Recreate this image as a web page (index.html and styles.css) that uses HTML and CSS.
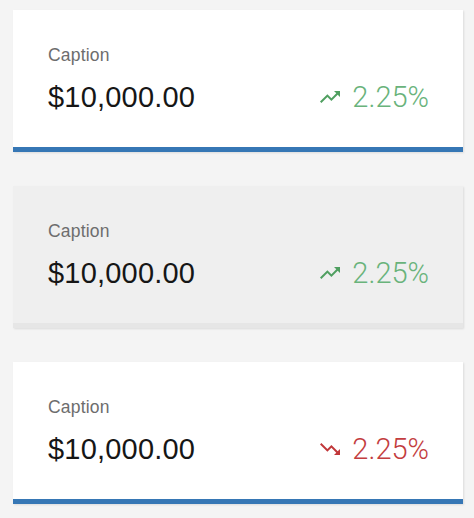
FILE: index.html
```html
<!DOCTYPE html>
<html lang="en">
<head>
<meta charset="UTF-8" />
<meta name="viewport" content="width=device-width, initial-scale=1" />
<title>Stat Tiles</title>
<link rel="stylesheet" href="styles.css">
</head>
<body>
  <div class="tiles">
    <div class="tile tile-selected">
      <div class="tile-caption">Caption</div>
      <div class="tile-row">
        <span class="tile-amount">$10,000.00</span>
        <span class="tile-change up">
          <svg class="trend-icon" viewBox="0 0 24 24" aria-hidden="true">
            <path d="M16 6l2.29 2.29-4.88 4.88-4-4L2 16.59 3.41 18l6-6 4 4 6.3-6.29L22 12V6z"/>
          </svg>
          <span class="tile-percent">2.25%</span>
        </span>
      </div>
    </div>

    <div class="tile tile-hover">
      <div class="tile-caption">Caption</div>
      <div class="tile-row">
        <span class="tile-amount">$10,000.00</span>
        <span class="tile-change up">
          <svg class="trend-icon" viewBox="0 0 24 24" aria-hidden="true">
            <path d="M16 6l2.29 2.29-4.88 4.88-4-4L2 16.59 3.41 18l6-6 4 4 6.3-6.29L22 12V6z"/>
          </svg>
          <span class="tile-percent">2.25%</span>
        </span>
      </div>
    </div>

    <div class="tile tile-selected">
      <div class="tile-caption">Caption</div>
      <div class="tile-row">
        <span class="tile-amount">$10,000.00</span>
        <span class="tile-change down">
          <svg class="trend-icon" viewBox="0 0 24 24" aria-hidden="true">
            <path d="M16 18l2.29-2.29-4.88-4.88-4 4L2 7.41 3.41 6l6 6 4-4 6.3 6.29L22 12v6z"/>
          </svg>
          <span class="tile-percent">2.25%</span>
        </span>
      </div>
    </div>
  </div>
</body>
</html>
```

FILE: styles.css
```css
/* Reset & base */
* {
  box-sizing: border-box;
}
body, html {
  margin: 0;
  height: 100%;
}
body {
  background: #f4f4f4;
  font-family: 'Liberation Sans', Arial, sans-serif;
  color: #161616;
  padding: 10px 11px 0 13px;
}

/* Tiles list */
.tiles {
  display: flex;
  flex-direction: column;
  gap: 34px;
}

.tile {
  background: #fff;
  padding: 35px 34px 34px 35px;
  border-bottom: 5px solid #e6e6e6;
  box-shadow: 1px 1px 2px rgba(0,0,0,0.1);
}
.tile-selected {
  border-bottom-color: #3677b5;
}
.tile-hover {
  background: #efefef;
}

.tile-caption {
  font-size: 17.5px;
  line-height: 21px;
  color: #6d6d6d;
  margin-bottom: 15px;
  letter-spacing: 0.2px;
}

.tile-row {
  display: flex;
  justify-content: space-between;
  align-items: center;
  height: 32px;
}

.tile-amount {
  font-size: 29px;
  line-height: 32px;
  letter-spacing: 0.2px;
}

.tile-change {
  display: flex;
  align-items: center;
  gap: 10px;
}
.trend-icon {
  width: 24px;
  height: 24px;
  fill: currentColor;
}
.tile-percent {
  font-family: Roboto, 'Liberation Sans', sans-serif;
  font-weight: 300;
  font-size: 29px;
  line-height: 32px;
}

.up .trend-icon { color: #4f9f60; }
.up .tile-percent { color: #69b37b; }
.down .trend-icon { color: #c1373a; }
.down .tile-percent { color: #c33d40; }
```
